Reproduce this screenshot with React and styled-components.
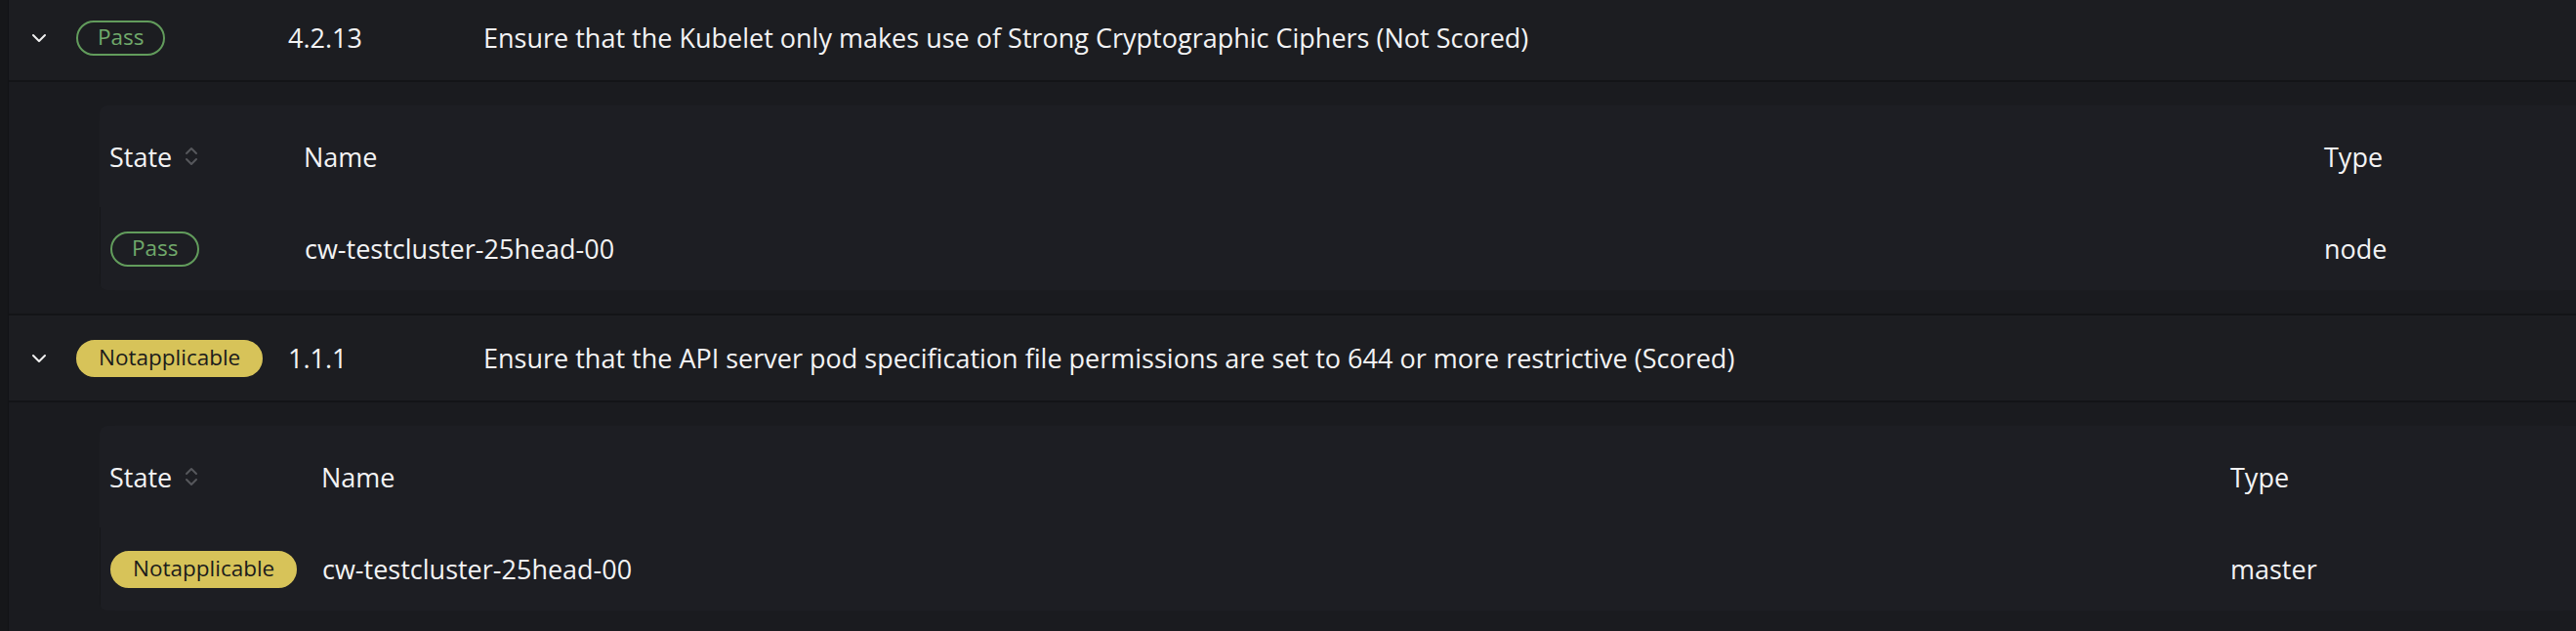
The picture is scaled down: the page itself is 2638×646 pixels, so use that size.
import React from "react";
import styled, { createGlobalStyle, css } from "styled-components";

const GlobalStyle = createGlobalStyle`
  html, body {
    margin: 0;
    padding: 0;
    background: #1a1b1f;
  }
  body {
    font-family: "Open Sans", "Noto Sans", sans-serif;
    color: #f3f3f4;
    overflow: hidden;
  }
`;

const Page = styled.div`
  display: flex;
  width: 2638px;
  height: 646px;
  overflow: hidden;
`;

const Strip = styled.div`
  flex: none;
  width: 8px;
  background: #16171a;
  border-right: 1px solid #121316;
`;

const List = styled.div`
  flex: 1;
  min-width: 0;
  margin-top: -5px;
`;

const CheckRow = styled.div`
  display: grid;
  grid-template-columns: 69px 217px 200px 1fr;
  align-items: center;
  height: 87px;
  background: #1c1d21;
  border-bottom: 2px solid #131417;
  font-size: 27px;
  font-weight: 500;
`;

const Toggle = styled.div`
  display: flex;
  align-items: center;
  padding-left: 23px;
`;

const Cell = styled.div`
  white-space: nowrap;
  line-height: 1;
`;

const Badge = styled.span`
  display: inline-flex;
  align-items: center;
  justify-content: center;
  box-sizing: border-box;
  height: ${(p) => (p.$filled ? "38px" : "36px")};
  padding: 0 ${(p) => (p.$filled ? "21px" : "20px")};
  border-radius: 19px;
  font-size: 22.5px;
  font-weight: 500;
  line-height: 1;
  white-space: nowrap;
  ${(p) =>
    p.$filled
      ? css`
          background: #d7c359;
          color: #1b1b1b;
          border: 2px solid #d7c359;
        `
      : css`
          background: transparent;
          color: #70a86a;
          border: 2px solid #629c5c;
        `}
`;

const Expanded = styled.div`
  padding: 24px 0 24px 93px;
  background: #1a1b1f;
  border-bottom: 2px solid #131417;
`;

const Card = styled.div`
  background: #1d1e23;
  border-radius: 8px 0 0 8px;
  box-shadow: 0 0 22px 6px rgba(255, 255, 255, 0.012);
  overflow: hidden;
`;

const TableRow = styled.div`
  display: grid;
  grid-template-columns: ${(p) => p.$cols};
  align-items: center;
  height: ${(p) => (p.$head ? "104px" : "85px")};
  font-size: 27px;
  font-weight: 500;
  ${(p) =>
    !p.$head &&
    css`
      border-left: 1px solid #16171a;
    `}
`;

const TableCell = styled.div`
  display: flex;
  align-items: center;
  gap: 12px;
  padding: 0 10px;
  white-space: nowrap;
  line-height: 1;
`;

const Chevron = () => (
  <svg width="16" height="10" viewBox="0 0 16 10" fill="none">
    <polyline
      points="2,2 8,8 14,2"
      stroke="#f0f0f0"
      strokeWidth="2"
      strokeLinecap="round"
      strokeLinejoin="round"
    />
  </svg>
);

const SortIcon = () => (
  <svg width="16" height="24" viewBox="0 0 16 24" fill="none">
    <polyline
      points="3,9 8,4 13,9"
      stroke="#56575c"
      strokeWidth="2"
      strokeLinecap="round"
      strokeLinejoin="round"
    />
    <polyline
      points="3,15 8,20 13,15"
      stroke="#56575c"
      strokeWidth="2"
      strokeLinecap="round"
      strokeLinejoin="round"
    />
  </svg>
);

const checks = [
  {
    state: "Pass",
    id: "4.2.13",
    title:
      "Ensure that the Kubelet only makes use of Strong Cryptographic Ciphers (Not Scored)",
    cols: "199px 1fr 268px",
    nodes: [{ state: "Pass", name: "cw-testcluster-25head-00", type: "node" }],
  },
  {
    state: "Notapplicable",
    id: "1.1.1",
    title:
      "Ensure that the API server pod specification file permissions are set to 644 or more restrictive (Scored)",
    cols: "217px 1fr 364px",
    nodes: [
      { state: "Notapplicable", name: "cw-testcluster-25head-00", type: "master" },
    ],
  },
];

const StateBadge = ({ state }) => (
  <Badge $filled={state !== "Pass"}>{state}</Badge>
);

export default function App() {
  return (
    <>
      <GlobalStyle />
      <Page>
        <Strip />
        <List>
          {checks.map((c) => (
            <React.Fragment key={c.id}>
              <CheckRow>
                <Toggle>
                  <Chevron />
                </Toggle>
                <Cell>
                  <StateBadge state={c.state} />
                </Cell>
                <Cell>{c.id}</Cell>
                <Cell>{c.title}</Cell>
              </CheckRow>
              <Expanded>
                <Card>
                  <TableRow $head $cols={c.cols}>
                    <TableCell>
                      State
                      <SortIcon />
                    </TableCell>
                    <TableCell>Name</TableCell>
                    <TableCell>Type</TableCell>
                  </TableRow>
                  {c.nodes.map((n) => (
                    <TableRow key={n.name} $cols={c.cols}>
                      <TableCell>
                        <StateBadge state={n.state} />
                      </TableCell>
                      <TableCell>{n.name}</TableCell>
                      <TableCell>{n.type}</TableCell>
                    </TableRow>
                  ))}
                </Card>
              </Expanded>
            </React.Fragment>
          ))}
        </List>
      </Page>
    </>
  );
}
